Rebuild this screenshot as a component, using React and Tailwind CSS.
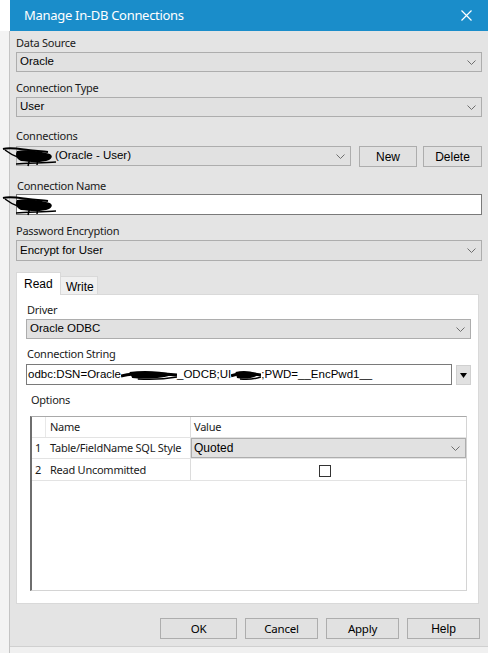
import React from "react";

const UI = "font-['Noto_Sans',sans-serif] tracking-[-0.25px]";
const MS = "font-['Liberation_Sans',Arial,sans-serif]";

const Chevron = () => (
  <svg width="9" height="5" viewBox="0 0 9 5" className="shrink-0">
    <polyline points="0.5,0.5 4.5,4.5 8.5,0.5" fill="none" stroke="#6e6e6e" strokeWidth="1" />
  </svg>
);

const Select = ({ value, h = "h-[20px]", children }) => (
  <div className={`${h} border border-[#adadad] bg-[#e1e1e1] flex items-center justify-between pl-[3px] pr-[5px] text-[11.5px] text-black ${MS}`}>
    <span className="flex items-center">{children}{value}</span>
    <Chevron />
  </div>
);

const Label = ({ children, className = "" }) => (
  <div className={`h-[16px] leading-[16px] text-[11px] text-[#1a1a1a] ${UI} ${className}`}>{children}</div>
);

// redaction scribble drawn over a value
const Scribble = ({ className }) => (
  <svg className={className} width="58" height="22" viewBox="0 0 58 22">
    <path d="M1,3 C8,1 18,3 26,4 C34,5 40,5 46,6" fill="none" stroke="#000" strokeWidth="2" />
    <path d="M3,4 C8,8 12,10 18,12 L40,13" fill="none" stroke="#000" strokeWidth="1.5" />
    <path d="M15,5 C24,3 36,5 44,7 C50,8 52,11 47,14 C40,17 28,16 19,15 C14,13 13,8 15,5 Z" fill="#000" />
    <path d="M14,18 C24,17 40,17 54,16" fill="none" stroke="#000" strokeWidth="1.5" />
    <path d="M28,12 L26,20 M36,12 L35,19" fill="none" stroke="#000" strokeWidth="1.5" />
  </svg>
);

const InlineScribble = ({ w }) => (
  <svg width={w} height="14" viewBox={`0 0 ${w} 14`} className="shrink-0">
    <path d={`M0,8 C${w * 0.3},4 ${w * 0.6},5 ${w},7`} fill="none" stroke="#000" strokeWidth="3" />
    <path d={`M${w * 0.15},4 C${w * 0.4},2 ${w * 0.7},3 ${w * 0.92},6 C${w * 0.8},11 ${w * 0.4},11 ${w * 0.2},10 Z`} fill="#000" />
    <path d={`M${w * 0.3},11 C${w * 0.6},12 ${w * 0.8},11 ${w},9`} fill="none" stroke="#000" strokeWidth="1.5" />
  </svg>
);

const Button = ({ children, className = "", font = MS, size = "text-[12px]" }) => (
  <div className={`h-[21px] border border-[#adadad] bg-[#e1e1e1] flex items-center justify-center ${size} text-black ${font} ${className}`}>
    {children}
  </div>
);

export default function App() {
  return (
    <div className="w-[488px] h-[653px] flex bg-[#f3f3f3] overflow-hidden relative">
      <div className="w-[10px] shrink-0 flex flex-col">
        <div className="h-[31px] bg-white" />
        <div className="flex-1 border-r border-[#c4c4c4]" />
      </div>

      <div className="flex-1 flex flex-col">
        {/* title bar */}
        <div className="h-[31px] bg-[#1a8dca] flex items-center justify-between pl-[14px] pr-[16px]">
          <span className="text-white text-[13px] font-['Noto_Sans',sans-serif] tracking-[-0.3px]">Manage In-DB Connections</span>
          <svg width="11" height="11" viewBox="0 0 11 11">
            <path d="M0.5,0.5 L10.5,10.5 M10.5,0.5 L0.5,10.5" stroke="#fff" strokeWidth="1.2" />
          </svg>
        </div>

        {/* body */}
        <div className="flex-1 bg-[#e4e4e4] px-[6px] pt-[4px] flex flex-col">
          <Label>Data Source</Label>
          <div className="mt-[1px]"><Select value="Oracle" /></div>

          <Label className="mt-[8px]">Connection Type</Label>
          <div className="mt-[1px]"><Select value="User" /></div>

          <Label className="mt-[11px]">Connections</Label>
          <div className="mt-[2px] flex relative">
            <div className="flex-1"><Select value="(Oracle - User)"><span className="w-[35px]" /></Select></div>
            <Button className="w-[58px] ml-[8px] h-[20px]">New</Button>
            <Button className="w-[59px] ml-[6px] h-[20px]">Delete</Button>
            <Scribble className="absolute left-[-14px] top-[0px]" />
          </div>

          <Label className="mt-[11px] ml-[1px]">Connection Name</Label>
          <div className="h-[21px] border border-[#7a7a7a] bg-white relative">
            <Scribble className="absolute left-[-15px] top-[0px]" />
          </div>

          <Label className="mt-[8px]">Password Encryption</Label>
          <div className="mt-[1px]"><Select value="Encrypt for User" h="h-[21px]" /></div>

          {/* tabs */}
          <div className="mt-[11px] flex items-end h-[22px] mr-[3px]">
            <div className={`h-[23px] w-[45px] bg-white border border-[#d9d9d9] border-b-0 relative z-10 -mb-[1px] pl-[7px] pt-[2px] text-[12px] text-black ${MS}`}>Read</div>
            <div className={`h-[18px] w-[37px] bg-[#f0f0f0] border border-[#d9d9d9] border-l-0 border-b-0 pl-[5px] pt-[1px] text-[12px] text-black ${MS}`}>Write</div>
          </div>
          <div className="h-[310px] mr-[3px] border border-[#d9d9d9] bg-white pl-[9px] pr-[7px] pt-[7px] flex flex-col">
            <Label className="ml-[1px]">Driver</Label>
            <div className="mt-[1px]"><Select value="Oracle ODBC" /></div>

            <Label className="mt-[7px] ml-[1px]">Connection String</Label>
            <div className="mt-[2px] flex">
              <div className={`flex-1 h-[21px] border border-[#7a7a7a] bg-white flex items-center pl-[1px] text-[11.5px] text-black whitespace-nowrap overflow-hidden ${MS}`}>
                <span>odbc:DSN=Oracle</span>
                <InlineScribble w={56} />
                <span>_ODCB;UI</span>
                <InlineScribble w={30} />
                <span>;PWD=__EncPwd1__</span>
              </div>
              <div className="w-[15px] h-[20px] ml-[4px] mt-[1px] bg-[#e1e1e1] border border-[#d0d0d0] flex items-center justify-center">
                <svg width="7" height="5" viewBox="0 0 7 5"><polygon points="0,0 7,0 3.5,5" fill="#000" /></svg>
              </div>
            </div>

            <Label className="mt-[7px] ml-[5px]">Options</Label>
            <div className={`mt-[8px] ml-[4px] mr-[4px] h-[175px] border-t border-r border-b border-t-[#a9a9a9] border-r-[#d4d4d4] border-b-[#d4d4d4] border-l-2 border-l-[#6e6e6e] bg-white text-[11px] text-[#1a1a1a] ${UI}`}>
              <div className="flex h-[21px] border-b border-[#e3e3e3]">
                <div className="w-[14px] border-r border-[#e8e8e8]" />
                <div className="w-[145px] border-r border-[#dcdcdc] pl-[4px] leading-[20px]">Name</div>
                <div className="flex-1 pl-[3px] leading-[20px]">Value</div>
              </div>
              <div className="flex h-[21px] border-b border-[#e3e3e3]">
                <div className="w-[14px] pl-[3px] leading-[20px]">1</div>
                <div className="w-[145px] border-r border-[#dcdcdc] pl-[4px] leading-[20px] whitespace-nowrap overflow-hidden">Table/FieldName SQL Style</div>
                <div className="flex-1 bg-[#e1e1e1] border border-[#adadad] flex items-center justify-between pl-[2px] pr-[5px]">
                  <span className={`text-[12px] tracking-normal text-black ${MS}`}>Quoted</span>
                  <Chevron />
                </div>
              </div>
              <div className="flex h-[22px] border-b border-[#e3e3e3]">
                <div className="w-[14px] pl-[3px] leading-[21px]">2</div>
                <div className="w-[145px] border-r border-[#dcdcdc] pl-[4px] leading-[21px]">Read Uncommitted</div>
                <div className="flex-1 flex items-center justify-center">
                  <div className="w-[12px] h-[12px] border border-[#333] bg-white mr-[8px] mt-[2px]" />
                </div>
              </div>
            </div>
          </div>

          {/* dialog buttons */}
          <div className="mt-[14px] flex justify-end mr-[2px]">
            <Button className="w-[77px]" font={UI} size="text-[11.5px]">OK</Button>
            <Button className="w-[73px] ml-[8px]" font={UI} size="text-[11.5px]">Cancel</Button>
            <Button className="w-[73px] ml-[8px]" font={UI} size="text-[11.5px]">Apply</Button>
            <Button className="w-[73px] ml-[8px]">Help</Button>
          </div>
        </div>
        <div className="h-[7px] border-t border-[#d0d0d0] bg-[#f0f0f0]" />
      </div>
    </div>
  );
}
